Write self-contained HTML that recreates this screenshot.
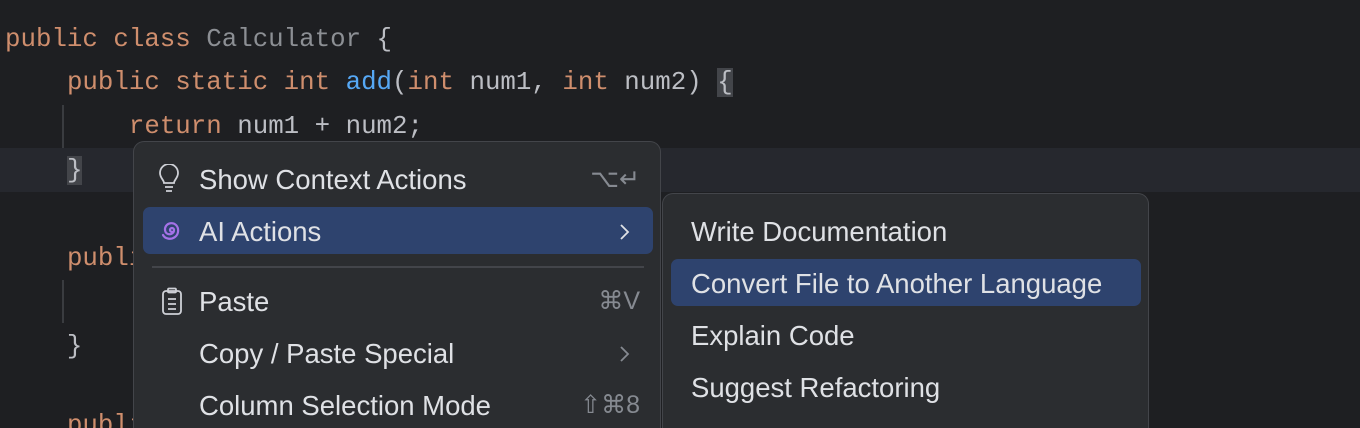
<!DOCTYPE html>
<html style="height:428px;overflow:hidden"><head><style>
body{margin:0;width:1360px;height:428px;background:#1e1f22;overflow:hidden;position:relative;font-family:"Liberation Sans",sans-serif}
.code{position:absolute;left:5px;font-family:"Liberation Mono",monospace;font-size:25.8px;color:#bcbec4;white-space:pre;line-height:44px}
.k{color:#cf8e6d}.f{color:#56a8f5}.g{color:#8c8f94}
.cur{position:absolute;left:0;top:148px;width:1360px;height:44px;background:#26282e}
.bm{background:#43454a}
.ind{position:absolute;left:62px;width:2px;background:#3a3c40}
.menu{position:absolute;background:#2b2d30;border:1px solid #43454a;border-bottom:0;border-radius:11px 11px 0 0;box-sizing:border-box}
.it{position:absolute;font-size:27.5px;color:#dfe1e5;line-height:47px;height:47px;white-space:nowrap}
.hl{position:absolute;background:#2e436e;border-radius:7px}
.sc{position:absolute;color:#868a91;font-size:25px;line-height:47px}
.ch{position:absolute}
</style></head><body>
<div class="cur"></div>
<div class="ind" style="top:105px;height:43px"></div>
<div class="ind" style="top:280px;height:43px"></div>
<div class="code" style="top:18px"><span class="k">public class </span><span class="g">Calculator</span> {</div>
<div class="code" style="top:61px">    <span class="k">public static int </span><span class="f">add</span>(<span class="k">int </span>num1, <span class="k">int </span>num2) <span class="bm">{</span></div>
<div class="code" style="top:105px">        <span class="k">return </span>num1 + num2;</div>
<div class="code" style="top:149px">    <span class="bm">}</span></div>
<div class="code" style="top:237px">    <span class="k">publi</span></div>
<div class="code" style="top:325px">    }</div>
<div class="code" style="top:404px;height:24px;overflow:hidden">    <span class="k">publi</span></div>

<div class="menu" style="left:133px;top:141px;width:528px;height:287px">
  <svg style="position:absolute;left:24px;top:22px" width="22" height="30" viewBox="0 0 22 30" fill="none" stroke="#ced0d6" stroke-width="1.8"><path d="M6 19c0-3-4-5-4-10a9 9 0 0118 0c0 5-4 7-4 10z"/><path d="M7 23h8M8 27h6"/></svg>
  <div class="it" style="left:65px;top:14px">Show Context Actions</div>
  <div class="sc" style="right:20px;top:14px">⌥↵</div>
  <div class="hl" style="left:9px;top:65px;width:510px;height:47px"></div>
  <svg style="position:absolute;left:26px;top:77px" width="24" height="24" viewBox="0 0 24 24" fill="none" stroke="#a572e8" stroke-width="2.2" stroke-linecap="round"><path d="M12 13a2 2 0 1 1 2-2c0 3-3 5-6 4s-4-5-2-8 7-4 10-1 3 9-1 12-10 2-12-2"/></svg>
  <div class="it" style="left:65px;top:66px">AI Actions</div>
  <svg class="ch" style="left:484px;top:81px" width="12" height="18" viewBox="0 0 12 18" fill="none" stroke="#dfe1e5" stroke-width="1.8"><path d="M3 2l7 7-7 7"/></svg>
  <div style="position:absolute;left:18px;top:124px;width:492px;height:2px;background:#43454a"></div>
  <svg style="position:absolute;left:27px;top:145px" width="24" height="30" viewBox="0 0 24 30" fill="none" stroke="#ced0d6" stroke-width="1.8"><rect x="2" y="4" width="18" height="23" rx="3"/><rect x="7" y="1.5" width="8" height="4" rx="1"/><path d="M7 12h8M7 17h8M7 22h8"/></svg>
  <div class="it" style="left:65px;top:136px">Paste</div>
  <div class="sc" style="right:20px;top:136px">⌘V</div>
  <div class="it" style="left:65px;top:188px">Copy / Paste Special</div>
  <svg class="ch" style="left:484px;top:203px" width="12" height="18" viewBox="0 0 12 18" fill="none" stroke="#868a91" stroke-width="1.8"><path d="M3 2l7 7-7 7"/></svg>
  <div class="it" style="left:65px;top:240px">Column Selection Mode</div>
  <div class="sc" style="right:20px;top:240px">⇧⌘8</div>
</div>

<div class="menu" style="left:662px;top:193px;width:487px;height:235px">
  <div class="it" style="left:28px;top:14px">Write Documentation</div>
  <div class="hl" style="left:8px;top:65px;width:470px;height:47px"></div>
  <div class="it" style="left:28px;top:66px">Convert File to Another Language</div>
  <div class="it" style="left:28px;top:118px">Explain Code</div>
  <div class="it" style="left:28px;top:170px">Suggest Refactoring</div>
</div>
</body></html>
